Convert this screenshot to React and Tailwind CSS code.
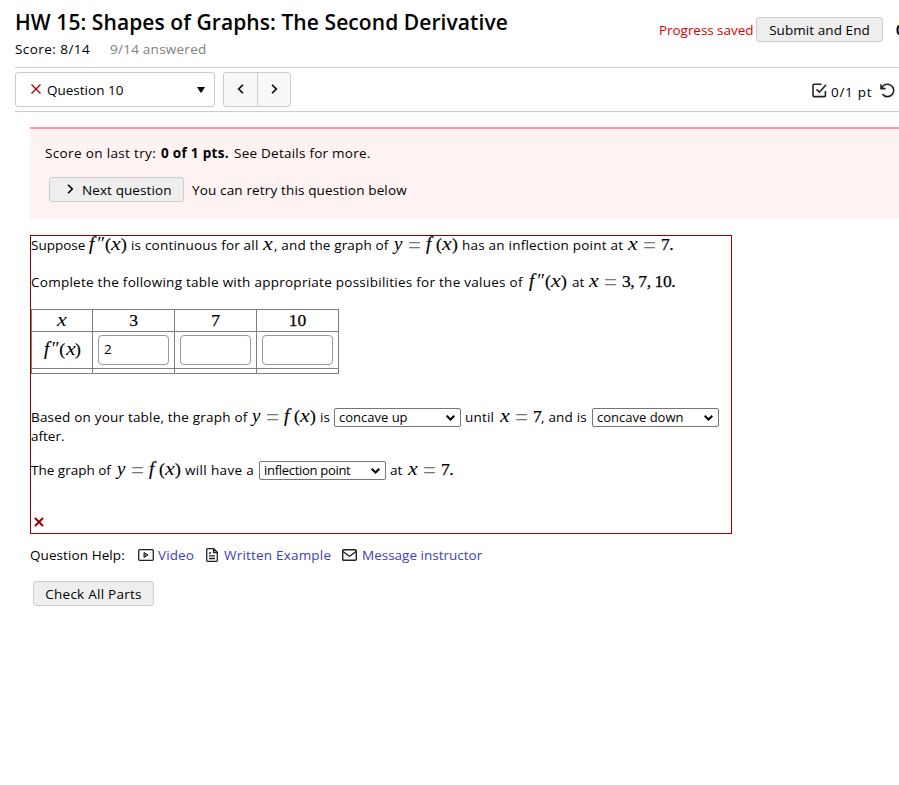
import React, { useState } from "react";

const Txt = ({ className = "", children }) => (
  <span className={`shrink-0 whitespace-pre ${className}`}>{children}</span>
);

// single math glyph, italic for variables
const Var = ({ className = "", children }) => (
  <span className={`font-['Liberation_Serif',serif] italic text-[19px] leading-5 shrink-0 ${className}`}>{children}</span>
);

const Num = ({ className = "", children }) => (
  <span className={`font-['Liberation_Serif',serif] text-[17.5px] leading-5 shrink-0 whitespace-pre [-webkit-text-stroke:0.25px_black] ${className}`}>{children}</span>
);

const X = ({ className = "" }) => (
  <Var className={className}><span className="inline-block origin-left scale-x-115">x</span></Var>
);

const Equals = () => (
  <span className="w-[18px] shrink-0 relative top-[3px] font-['Liberation_Serif',serif] text-[#777] text-[23px] leading-5">=</span>
);

const FofX = ({ prime = false }) => (
  <span className="inline-flex items-baseline shrink-0">
    <Var className={`text-[18px] [-webkit-text-stroke:0.2px_black] ${prime ? "w-[7px]" : "w-[10px]"}`}>f</Var>
    {prime && <Var className="w-[9px] text-[17px]">″</Var>}
    <Num className="w-[6px]">(</Num>
    <X className="w-[10px]" />
    <Num>)</Num>
  </span>
);

const YEqualsF = () => (
  <span className="flex items-baseline shrink-0 w-[68px]">
    <Var className="w-[14px]">y</Var>
    <Equals />
    <FofX />
  </span>
);

const XEquals = ({ value, className = "" }) => (
  <span className={`flex items-baseline shrink-0 ${className}`}>
    <X className="w-[15px]" />
    <Equals />
    <Num className="tracking-[-0.4px]">{value}</Num>
  </span>
);

const Dropdown = ({ value, options, onChange, className = "" }) => (
  <button
    type="button"
    onClick={() => onChange(options[(options.indexOf(value) + 1) % options.length])}
    className={`w-[127px] h-[19px] shrink-0 self-start mt-[3px] border border-[#767676] rounded-[2px] bg-white flex items-center justify-between pl-1 pr-[5px] text-[13px] leading-[17px] whitespace-nowrap ${className}`}
  >
    <span>{value}</span>
    <svg className="w-[9px] h-[6px]" viewBox="0 0 9 6" fill="none" stroke="black" strokeWidth="2">
      <path d="M.7.8l3.8 3.7L8.3.8" />
    </svg>
  </button>
);

export default function App() {
  const [answers, setAnswers] = useState(["2", "", ""]);
  const [before, setBefore] = useState("concave up");
  const [after, setAfter] = useState("concave down");
  const [kind, setKind] = useState("inflection point");

  const handleAnswer = (i, value) => {
    setAnswers((prev) => prev.map((a, idx) => (idx === i ? value : a)));
  };

  return (
    <div className="w-full h-[785px] overflow-hidden bg-white text-black font-['Open_Sans',sans-serif] text-[13.5px] leading-5">
      {/* Header */}
      <header className="ml-[15px] h-[68px] border-b border-[#ccc] flex justify-between">
        <div className="shrink-0">
          <h1 className="mt-[8px] text-[21px] leading-7 font-semibold whitespace-nowrap tracking-[0.08px]">HW 15: Shapes of Graphs: The Second Derivative</h1>
          <div className="flex mt-[3px]">
            <Txt className="w-[95px] tracking-[0.45px]">Score: 8/14</Txt>
            <Txt className="text-[#808080] tracking-[0.25px]">9/14 answered</Txt>
          </div>
        </div>
        <div className="flex items-start shrink-0">
          <Txt className="mt-[20px] w-[97px] text-[#d90000] tracking-[-0.05px]">Progress saved</Txt>
          <button className="mt-[17px] w-[127px] h-[25px] rounded-[3px] border border-[#ccc] bg-[#eee] whitespace-nowrap tracking-[0.07px]">Submit and End</button>
          <div className="w-4 mt-[20px] pl-[13px] overflow-hidden whitespace-nowrap font-bold">0</div>
        </div>
      </header>

      {/* Question navigation */}
      <nav className="ml-[15px] h-11 border-b border-[#ccc] flex items-start pt-1">
        <button className="w-[200px] h-[35px] rounded-[3px] border border-[#ccc] flex items-center pl-[15px] pr-[9px]">
          <svg className="w-[10px] h-[10px] mr-[6px] mb-[2px]" viewBox="0 0 10 10" fill="none" stroke="#a00000" strokeWidth="1.3">
            <path d="M.5.5l9 9M9.5.5l-9 9" />
          </svg>
          <Txt>Question 10</Txt>
          <svg className="w-2 h-[6px] ml-auto" viewBox="0 0 8 6"><path d="M0 0h8L4.7 5.3q-.7.8-1.4 0z" /></svg>
        </button>
        <div className="ml-2 flex w-[68px] h-[35px] rounded-[3px] border border-[#ccc] bg-[#f8f8f8]">
          <button className="w-[34px] border-r border-[#ccc] flex items-center justify-center">
            <svg className="w-2 h-[10px] mb-[2px]" viewBox="0 0 8 10" fill="none" stroke="black" strokeWidth="1.6"><path d="M6 .7L1.7 5 6 9.3" /></svg>
          </button>
          <button className="flex-1 flex items-center justify-center">
            <svg className="w-2 h-[10px] mb-[2px]" viewBox="0 0 8 10" fill="none" stroke="black" strokeWidth="1.6"><path d="M2 .7L6.3 5 2 9.3" /></svg>
          </button>
        </div>
        <div className="ml-auto pr-1 flex mt-[10px]">
          <svg className="w-[15px] h-[15px] mt-[1px] mr-1" viewBox="0 0 15 15" fill="none" stroke="#222" strokeWidth="1.6">
            <path d="M9.5 1.2H2.2Q1 1.2 1 2.4v10Q1 13.6 2.2 13.6h10q1.2 0 1.2-1.2V8" />
            <path d="M4.5 6.3L7.5 9.2 14 1.8" />
          </svg>
          <Txt className="w-[49px] tracking-[0.7px]">0/1 pt</Txt>
          <svg className="w-[15px] h-[15px] mt-[1px]" viewBox="0 0 15 15" fill="none" stroke="#222" strokeWidth="1.6">
            <path d="M1 1.2v4.4h4.6M1.6 5.4A6.2 6.2 0 1 1 2.4 11" />
          </svg>
        </div>
      </nav>

      <main className="ml-[30px] pt-[15px]">
        {/* Last attempt */}
        <section className="h-[92px] border-t-2 border-[#f99] bg-[#fff2f2] pl-[15px] pt-[14px]">
          <div className="flex">
            <Txt className="w-[116px] tracking-[0.35px]">Score on last try: </Txt>
            <Txt className="w-[73px] font-bold tracking-[0.3px]">0 of 1 pts.</Txt>
            <Txt className="tracking-[0.24px]">See Details for more.</Txt>
          </div>
          <div className="flex mt-[14px] ml-1 items-center">
            <button className="w-[135px] h-[25px] rounded-[3px] border border-[#ccc] bg-[#eee] flex items-center pl-[16px]">
              <svg className="w-2 h-[10px] mr-2 mb-[2px]" viewBox="0 0 8 10" fill="none" stroke="black" strokeWidth="1.6"><path d="M2 .7L6.3 5 2 9.3" /></svg>
              <Txt className="tracking-[0.1px]">Next question</Txt>
            </button>
            <Txt className="ml-[8px] tracking-[0.15px]">You can retry this question below</Txt>
          </div>
        </section>

        {/* Question */}
        <section className="mt-4 w-[702px] h-[299px] border border-[#900]">
          <div className="flex items-baseline h-5 -mt-[3px]">
            <Txt className="w-[58px]">Suppose</Txt>
            <span className="w-[42px] shrink-0"><FofX prime /></span>
            <Txt className="w-[132px] tracking-[0.2px]">is continuous for all</Txt>
            <X className="w-[11px]" />
            <Txt className="w-[120px] tracking-[0.15px]">, and the graph of</Txt>
            <YEqualsF />
            <Txt className="w-[166px] tracking-[0.22px]">has an inflection point at</Txt>
            <XEquals value="7." />
          </div>
          <div className="flex items-baseline h-5 mt-[17px]">
            <Txt className="w-[498px] tracking-[0.26px]">Complete the following table with appropriate possibilities for the values of</Txt>
            <span className="w-[43px] shrink-0"><FofX prime /></span>
            <Txt className="w-[17px]">at</Txt>
            <XEquals value="3, 7, 10." />
          </div>

          <table className="mt-[19px] border-collapse table-fixed w-[308px] text-center">
            <colgroup>
              <col className="w-[61px]" />
              <col className="w-[82px]" />
              <col className="w-[82px]" />
              <col className="w-[82px]" />
            </colgroup>
            <tbody>
              <tr className="h-[22px]">
                <td className="border border-[#808080] p-0 pr-[2px] leading-5"><X /></td>
                {["3", "7", "10"].map((n) => (
                  <td key={n} className="border border-[#808080] p-0 leading-5"><Num>{n}</Num></td>
                ))}
              </tr>
              <tr className="h-[37px]">
                <td className="border border-[#808080] p-0 pb-[2px]"><FofX prime /></td>
                {answers.map((a, i) => (
                  <td key={i} className="border border-[#808080] p-0">
                    <input
                      type="text"
                      value={a}
                      onChange={(e) => handleAnswer(i, e.target.value)}
                      className="block mx-auto w-[71px] h-[30px] rounded border border-[#999] px-[5px] pb-[2px] bg-white outline-none"
                    />
                  </td>
                ))}
              </tr>
              <tr className="h-[5px]">
                {[0, 1, 2, 3].map((i) => (
                  <td key={i} className="border border-[#808080] p-0"></td>
                ))}
              </tr>
            </tbody>
          </table>

          <div className="flex items-baseline h-5 mt-[31px]">
            <Txt className="w-[221px] tracking-[0.2px]">Based on your table, the graph of</Txt>
            <YEqualsF />
            <Txt className="w-[14px]">is</Txt>
            <Dropdown value={before} onChange={setBefore} options={["concave up", "concave down"]} />
            <Txt className="w-[35px] ml-1 tracking-[0.2px]">until</Txt>
            <XEquals value="7" className="w-[41px]" />
            <Txt className="w-[51px] tracking-[0.2px]">, and is</Txt>
            <Dropdown value={after} onChange={setAfter} options={["concave up", "concave down"]} />
          </div>
          <div className="h-5 mt-[1px]">after.</div>
          <div className="flex items-baseline h-5 mt-[12px]">
            <Txt className="w-[86px]">The graph of</Txt>
            <YEqualsF />
            <Txt className="w-[74px] tracking-[0.35px]">will have a</Txt>
            <Dropdown value={kind} onChange={setKind} options={["inflection point", "maximum", "minimum"]} className="tracking-[-0.3px]" />
            <Txt className="w-[18px] ml-1">at</Txt>
            <XEquals value="7." />
          </div>
          <svg className="mt-[39px] ml-[3px] w-[10px] h-[10px]" viewBox="0 0 10 10" fill="none" stroke="#900" strokeWidth="2">
            <path d="M1 1l8 8M9 1L1 9" />
          </svg>
        </section>

        {/* Help links */}
        <div className="flex mt-[11px] text-[#4040bb]">
          <Txt className="w-[108px] text-black tracking-[0.08px]">Question Help:</Txt>
          <svg className="w-4 h-3 mt-1 mr-1 shrink-0" viewBox="0 0 16 12" fill="none" stroke="#222" strokeWidth="1.3">
            <rect x=".7" y=".7" width="14.6" height="10.6" rx="1" />
            <path d="M6 3.5v5L10 6z" fill="#777" strokeWidth="1" />
          </svg>
          <Txt className="w-[48px] tracking-[0.1px]">Video</Txt>
          <svg className="w-3 h-[14px] mt-[3px] mr-[6px] shrink-0" viewBox="0 0 12 14" fill="none" stroke="#222" strokeWidth="1.3">
            <path d="M1.7.7h6l3.6 3.6v8q0 1-1 1H1.7q-1 0-1-1V1.7q0-1 1-1zM7.5.7v3.8h3.8M3 5h2M3 7.8h6M3 10.5h6" />
          </svg>
          <Txt className="w-[118px] tracking-[0.2px]">Written Example</Txt>
          <svg className="w-[15px] h-3 mt-1 mr-[5px] shrink-0" viewBox="0 0 15 12" fill="none" stroke="#222" strokeWidth="1.4">
            <rect x=".7" y=".7" width="13.6" height="10.6" rx="1" />
            <path d="M1 2.5l5.3 4q1.2.9 2.4 0l5.3-4" />
          </svg>
          <Txt>Message instructor</Txt>
        </div>
        <button className="block mt-4 ml-[3px] w-[121px] h-[25px] rounded-[3px] border border-[#ccc] bg-[#eee] whitespace-nowrap tracking-[0.25px]">Check All Parts</button>
      </main>
    </div>
  );
}
